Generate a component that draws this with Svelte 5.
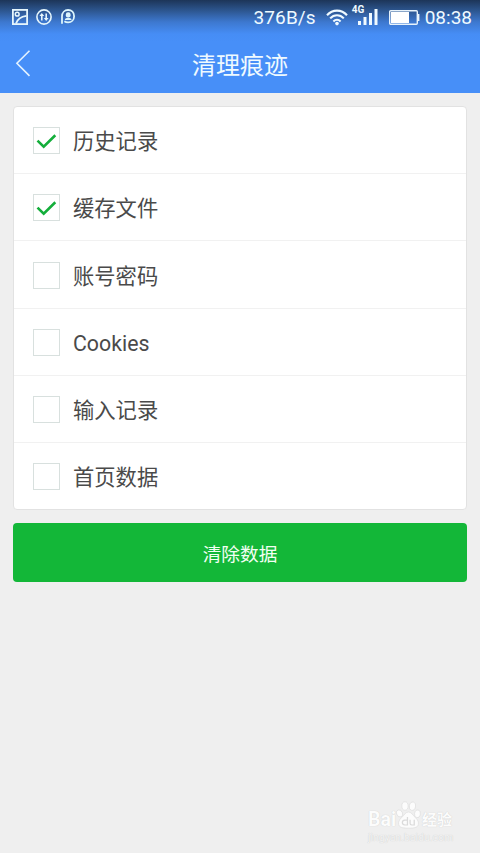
<script>
	let items = $state([
		{ label: '历史记录', checked: true },
		{ label: '缓存文件', checked: true },
		{ label: '账号密码', checked: false },
		{ label: 'Cookies', checked: false },
		{ label: '输入记录', checked: false },
		{ label: '首页数据', checked: false }
	])

	function clearData() {
		items.forEach((item) => item.checked = false)
	}
</script>

<div class="screen">
	<header>
		<div class="status">
			<div class="notices">
				<svg width="16" height="16" viewBox="0 0 16 16" fill="none" stroke="#e6f6fc" stroke-width="1.8">
					<rect x="0.9" y="0.9" width="14.2" height="14.2"></rect>
					<circle cx="5.2" cy="5.2" r="1.9" stroke-width="1.5"></circle>
					<path d="M4 14.5C5.5 9.8 9 7.5 14.5 6.8"></path>
				</svg>
				<svg width="16" height="16" viewBox="0 0 16 16" fill="none" stroke="#e6f6fc" stroke-width="1.6">
					<circle cx="8" cy="8" r="7.1"></circle>
					<path d="M5.8 11.5V5.5M10.2 4.5v6"></path>
					<path d="M5.8 4L3.4 7h4.8zM10.2 12L7.8 9h4.8z" fill="#e6f6fc" stroke="none"></path>
				</svg>
				<svg width="16" height="16" viewBox="0 0 16 16" fill="none" stroke="#dcf5fc" stroke-width="1.8">
					<path d="M2 14.8V7.3C2 3.6 4.600 1 8.100 1s6 2.600 6 6.200-2.600 6.200-6 6.200c-1.500 0-2.700-.4-3.700-1.200"></path>
					<rect x="5.8" y="3.3" width="4.8" height="5.2" rx="2.2" fill="#dcf5fc" stroke="none"></rect>
					<path d="M4.8 11c.2-3 6.600-3 6.800 0z" fill="#dcf5fc" stroke="none"></path>
				</svg>
			</div>
			<span class="speed">376B/s</span>
			<svg class="wifi" width="22" height="17" viewBox="0 0 22 17" fill="none" stroke="#f0faff" stroke-width="2.1">
				<path d="M1 6.2C6.6.1 15.4.1 21 6.2"></path>
				<path d="M4.2 9.4c3.9-4.2 9.7-4.2 13.6 0"></path>
				<path d="M7.4 12.4c2.2-2.3 5-2.3 7.2 0"></path>
				<circle cx="11" cy="14.6" r="1.8" fill="#f0faff" stroke="none"></circle>
			</svg>
			<div class="signal">
				<span>4G</span>
				<svg width="20" height="16" viewBox="0 0 20 16" fill="#f0faff">
					<rect x="0" y="12" width="3" height="4"></rect>
					<rect x="5.5" y="8" width="3" height="8"></rect>
					<rect x="11" y="4" width="3" height="12"></rect>
					<rect x="16.5" y="0" width="3" height="16"></rect>
				</svg>
			</div>
			<svg class="battery" width="31" height="15" viewBox="0 0 31 15">
				<rect x="0.7" y="0.7" width="27.6" height="13.6" rx="1" fill="none" stroke="#e8f3fb" stroke-width="1.4"></rect>
				<rect x="2" y="2" width="18" height="11" fill="#fff"></rect>
				<rect x="28.6" y="4" width="1.8" height="7" fill="#e8f3fb"></rect>
			</svg>
			<span class="clock">08:38</span>
		</div>
		<div class="bar">
			<button class="back" aria-label="返回">
				<svg width="16" height="28" viewBox="0 0 16 28" fill="none" stroke="#e3f2ff" stroke-width="1.6">
					<path d="M14.5 0.7L1.9 13.3l12.6 12.6"></path>
				</svg>
			</button>
			<h1>清理痕迹</h1>
		</div>
	</header>

	<main>
		<ul>
			{#each items as item}
				<li>
					<label>
						<input type="checkbox" bind:checked={item.checked}>
						<span class="box">
							{#if item.checked}
								<svg width="21" height="16" viewBox="0 0 21 16" fill="none" stroke="#14ae3b" stroke-width="2.6">
									<path d="M1.5 7.6l6.200 6L19.300 2.200"></path>
								</svg>
							{/if}
						</span>
						<span class="label">{item.label}</span>
					</label>
				</li>
			{/each}
		</ul>
		<button class="clear" onclick={clearData}>清除数据</button>
	</main>

	<div class="watermark">
		<div class="brand">
			<span class="bai">Bai</span>
			<svg width="25" height="28" viewBox="0 0 24 28" preserveAspectRatio="none" fill="#fcfcfc" stroke="#dadada" stroke-width="0.6">
				<ellipse cx="3.4" cy="12.4" rx="2.8" ry="3.6" transform="rotate(-20 3.4 12.4)"></ellipse>
				<ellipse cx="8.6" cy="5" rx="3" ry="4.2"></ellipse>
				<ellipse cx="15.8" cy="5.2" rx="3" ry="4.2" transform="rotate(12 15.8 5.2)"></ellipse>
				<ellipse cx="20.6" cy="12.8" rx="2.8" ry="3.8" transform="rotate(10 20.6 12.8)"></ellipse>
				<path d="M12 11c3 0 4.2 3.4 6.4 5.4 2.6 2.4 3.6 4.8 3 7.2-.7 2.8-3.4 3.6-9.4 3.6s-8.7-.8-9.4-3.6c-.6-2.4.4-4.8 3-7.2C7.8 14.400 9 11 12 11z"></path>
				<path d="M11 16v8H8.5a2.3 2.3 0 0 1 0-4.8H11M13.5 18.8v3.500q0 1.700 1.700 1.700h2.300v-5.200" fill="none" stroke="#dadada" stroke-width="1.2"></path>
			</svg>
			<span class="jy">经验</span>
		</div>
		<div class="url">jingyan.baidu.com</div>
	</div>
</div>

<style>
	:global(body) {
		margin: 0;
	}
	.screen {
		position: relative;
		display: flex;
		flex-direction: column;
		height: 853px;
		overflow: hidden;
		background: #efefef;
		font-family: Roboto, "Noto Sans CJK SC", sans-serif;
	}
	header {
		height: 93px;
		background: linear-gradient(#1d3558 0, #2c548c 10px, #3d78cf 22px, #468df5 34px, #478ff8 42px);
		color: #effaff;
	}
	.status {
		display: flex;
		align-items: center;
		box-sizing: border-box;
		height: 34px;
		padding: 0 8px 0 12px;
	}
	.notices {
		display: flex;
		gap: 8px;
		margin-right: auto;
	}
	.speed {
		font-size: 19px;
		letter-spacing: 0.1px;
		line-height: 34px;
		padding-top: 1px;
	}
	.wifi {
		margin-left: 10px;
	}
	.signal {
		position: relative;
		display: flex;
		margin-left: 10px;
	}
	.signal span {
		position: absolute;
		left: -6px;
		top: -5px;
		font-size: 10px;
		line-height: 11px;
		font-weight: 700;
	}
	.battery {
		margin-left: 11px;
	}
	.clock {
		margin-left: 5px;
		font-size: 19px;
		line-height: 34px;
		padding-top: 1px;
	}
	.bar {
		display: grid;
		grid-template-columns: 48px 1fr 48px;
		align-items: center;
		height: 59px;
	}
	button {
		border: none;
		padding: 0;
		font-family: inherit;
	}
	.back {
		display: flex;
		padding-left: 15px;
		background: transparent;
	}
	h1 {
		margin: 0;
		padding-top: 4px;
		text-align: center;
		font-size: 24px;
		line-height: 34px;
		font-weight: 400;
	}
	main {
		padding: 13px 13px 0;
	}
	ul {
		display: flex;
		flex-direction: column;
		box-sizing: border-box;
		height: 404px;
		margin: 0 0 13px;
		padding: 0;
		list-style: none;
		background: #fff;
		border: 1px solid #e2e2e2;
		border-radius: 4px;
	}
	li {
		flex: 1;
		display: flex;
		border-bottom: 1px solid #f1f1f1;
	}
	li:last-child {
		border-bottom: none;
	}
	label {
		flex: 1;
		display: flex;
		align-items: center;
		padding: 1.2px 0 0 19px;
	}
	input {
		position: absolute;
		opacity: 0;
	}
	.box {
		display: flex;
		align-items: center;
		justify-content: center;
		box-sizing: border-box;
		width: 27px;
		height: 27px;
		border: 1px solid #d8e0de;
	}
	.label {
		margin-left: 13px;
		padding-top: 3px;
		font-size: 21.3px;
		line-height: 32px;
		color: #4a4a4a;
	}
	.clear {
		display: block;
		width: 100%;
		height: 59px;
		border-radius: 4px;
		background: #13b738;
		color: #f2fff2;
		font-size: 18.7px;
	}
	/* sits over the page in the bottom right corner */
	.watermark {
		position: absolute;
		right: 26px;
		bottom: 9px;
		width: 86px;
		color: #fcfcfc;
		text-shadow: 0 0 1px #c4c4c4;
	}
	.brand {
		display: flex;
		align-items: flex-end;
		height: 28px;
		margin-bottom: 3px;
	}
	.bai {
		font-size: 19.5px;
		line-height: 18px;
		font-weight: 700;
	}
	.jy {
		margin-left: 1px;
		font-size: 15px;
		line-height: 17px;
		font-weight: 700;
	}
	.url {
		font-size: 10.5px;
		line-height: 12px;
		color: #f3f3f3;
		white-space: nowrap;
	}
</style>
